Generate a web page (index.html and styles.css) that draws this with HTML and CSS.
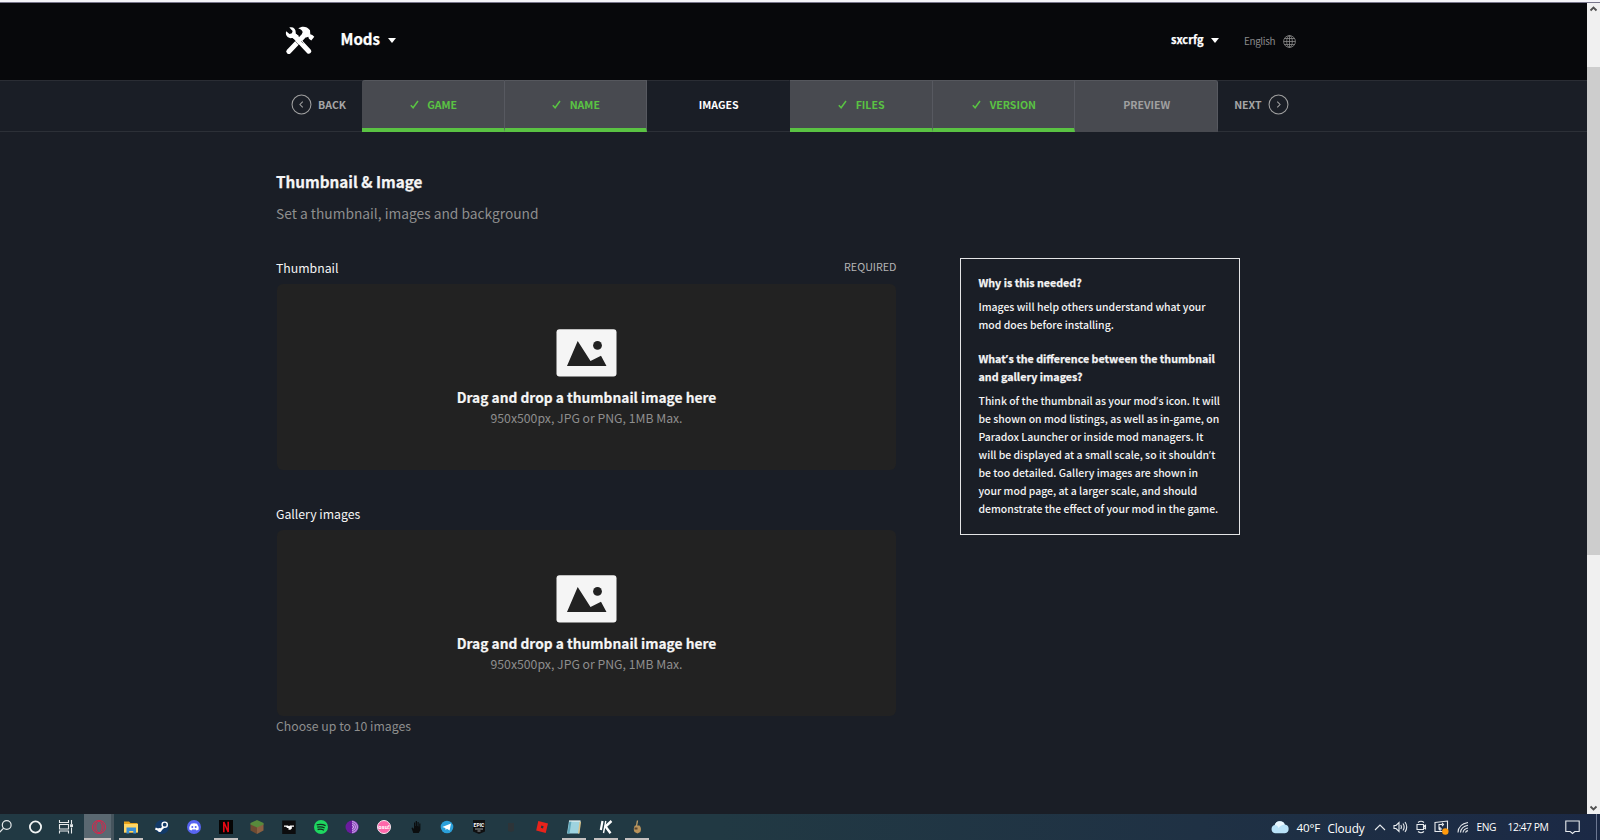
FILE: index.html
```
<!DOCTYPE html>
<html lang="en">
<head>
    <meta charset="UTF-8">
    <meta name="viewport" content="width=device-width, initial-scale=1.0">
    <title>Mods - Thumbnail &amp; Image</title>
    <link rel="stylesheet" href="styles.css">
</head>
<body>
    <div class="window-edge"></div>

    <div class="browser">
        <div class="page">
            <header class="header">
                <svg class="logo" viewBox="0 0 30 30">
                    <g fill="none" stroke="#fff" stroke-linecap="round">
                        <path d="M9.5 10 L23.8 25.2" stroke-width="5"/>
                        <path d="M3.8 25.4 L20 8.5" stroke-width="5"/>
                    </g>
                    <path fill="#fff" d="M4.3 1.6 L7.6 4.9 L6.9 7.2 L4.5 7.9 L1.2 5.2 C-.1 9 2.6 13 7.4 12 L10.5 13.6 L14 10 L10.6 7.6 C11.4 3.5 8.6 .3 4.3 1.6z"/>
                    <path fill="#fff" d="M13.2 2.5 C17-.2 21.8.2 25 4.2 L25.3 8.2 L27.3 8.9 L29.3 10.7 L26.3 14.5 L23.9 12.8 L23.3 10.7 L21.2 11.5 L17 8 C18.6 5.2 16.7 3.4 13.2 2.5z"/>
                    <path d="M10.2 15.2 L15 20.2 M16.2 15.2 L18.3 17.4" stroke="#07080b" stroke-width=".5"/>
                </svg>
                <div class="menu">Mods <i class="caret"></i></div>
                <div class="user">sxcrfg <i class="caret"></i></div>
                <div class="language">
                    English
                    <svg class="globe" viewBox="0 0 13 13" fill="none" stroke="#8b8b8b" stroke-width=".8">
                        <circle cx="6.5" cy="6.5" r="5.9"/>
                        <ellipse cx="6.5" cy="6.5" rx="2.8" ry="5.9"/>
                        <path d="M6.5 .6v11.8M.6 6.5h11.8M1.4 3.5h10.2M1.4 9.5h10.2"/>
                    </svg>
                </div>
            </header>

            <nav class="steps">
                <a class="step-link back">
                    <svg viewBox="0 0 20 20"><circle cx="10" cy="10" r="9"/><path d="M11.2 7.2 L8.5 10 L11.2 12.8"/></svg>
                    BACK
                </a>
                <a class="step done first"><svg class="check" viewBox="0 0 9 9"><path d="M.8 5.2 L3.1 7.7 L8 1"/></svg>GAME</a>
                <a class="step done"><svg class="check" viewBox="0 0 9 9"><path d="M.8 5.2 L3.1 7.7 L8 1"/></svg>NAME</a>
                <a class="step active">IMAGES</a>
                <a class="step done"><svg class="check" viewBox="0 0 9 9"><path d="M.8 5.2 L3.1 7.7 L8 1"/></svg>FILES</a>
                <a class="step done"><svg class="check" viewBox="0 0 9 9"><path d="M.8 5.2 L3.1 7.7 L8 1"/></svg>VERSION</a>
                <a class="step last">PREVIEW</a>
                <a class="step-link next">
                    NEXT
                    <svg viewBox="0 0 20 20"><circle cx="10" cy="10" r="9"/><path d="M8.8 7.2 L11.5 10 L8.8 12.8"/></svg>
                </a>
            </nav>

            <main class="content">
                <section class="uploads">
                    <h1>Thumbnail &amp; Image</h1>
                    <p class="subtitle">Set a thumbnail, images and background</p>

                    <div class="label-row">
                        <span class="label">Thumbnail</span>
                        <span class="required">REQUIRED</span>
                    </div>
                    <div class="dropzone">
                        <svg class="picture" viewBox="0 0 61 48">
                            <rect x=".5" y=".3" width="60" height="47.2" rx="3" fill="#f5f5f5"/>
                            <path d="M11 37 L21.7 12 L34.5 32 L45 26.7 L50.5 37z" fill="#222"/>
                            <circle cx="41.5" cy="16.4" r="4.4" fill="#222"/>
                        </svg>
                        <strong>Drag and drop a thumbnail image here</strong>
                        <span>950x500px, JPG or PNG, 1MB Max.</span>
                    </div>

                    <div class="label-row gallery">
                        <span class="label">Gallery images</span>
                    </div>
                    <div class="dropzone">
                        <svg class="picture" viewBox="0 0 61 48">
                            <rect x=".5" y=".3" width="60" height="47.2" rx="3" fill="#f5f5f5"/>
                            <path d="M11 37 L21.7 12 L34.5 32 L45 26.7 L50.5 37z" fill="#222"/>
                            <circle cx="41.5" cy="16.4" r="4.4" fill="#222"/>
                        </svg>
                        <strong>Drag and drop a thumbnail image here</strong>
                        <span>950x500px, JPG or PNG, 1MB Max.</span>
                    </div>
                    <p class="hint">Choose up to 10 images</p>
                </section>

                <aside class="info">
                    <h2>Why is this needed?</h2>
                    <p>Images will help others understand what your<br>mod does before installing.</p>
                    <h2>What<span class="apos">’</span>s the difference between the thumbnail<br>and gallery images?</h2>
                    <p>Think of the thumbnail as your mod<span class="apos">’</span>s icon. It will<br>be shown on mod listings, as well as in-game, on<br>Paradox Launcher or inside mod managers. It<br>will be displayed at a small scale, so it shouldn<span class="apos">’</span>t<br>be too detailed. Gallery images are shown in<br>your mod page, at a larger scale, and should<br>demonstrate the effect of your mod in the game.</p>
                </aside>
            </main>
        </div>

        <div class="scrollbar">
            <svg viewBox="0 0 13 12"><path d="M3.5 7.5 L6.5 4.5 L9.5 7.5"/></svg>
            <div class="thumb"></div>
            <svg viewBox="0 0 13 12"><path d="M3.5 4.5 L6.5 7.5 L9.5 4.5"/></svg>
        </div>
    </div>

    <footer class="taskbar">
        <div class="apps">
            <!-- search -->
            <div class="app"><svg viewBox="0 0 20 20" fill="none" stroke="#e6eaeb" stroke-width="1.2"><circle cx="12.7" cy="8" r="4.4"/><path d="M9.6 11.2 L5 16"/></svg></div>
            <!-- cortana -->
            <div class="app"><svg viewBox="0 0 20 20"><circle cx="9.5" cy="10" r="5.6" fill="none" stroke="#f2f5f5" stroke-width="1.8"/></svg></div>
            <!-- task view -->
            <div class="app"><svg viewBox="0 0 20 20" fill="none" stroke="#e6eaeb" stroke-width="1.1"><path d="M2.500 3v2.500h9V3M2.500 16.500v-2.500h9v2.500M2.500 7.500h9v4.500h-9zM14.500 3v4M14.500 10.500v6"/><rect x="13.700" y="7.800" width="1.700" height="1.700" fill="#fff"/></svg></div>
            <!-- opera -->
            <div class="app current"><svg viewBox="0 0 20 20" fill="none" stroke="#d7264c" stroke-width="1"><circle cx="10" cy="10" r="6.600"/><ellipse cx="10" cy="10" rx="3.200" ry="5.700"/><ellipse cx="10" cy="10" rx="4.700" ry="6.600" stroke-width=".5"/></svg></div>
            <!-- explorer -->
            <div class="app open"><svg viewBox="0 0 20 20"><path d="M3 4.500h5l1.500 1.500h7v9.500H3z" fill="#e8a21a"/><path d="M3 7h14v8.500H3z" fill="#ffd766"/><path d="M5.500 10.500h9.500v6h-2.700v-2.500H8.200v2.500H5.500z" fill="#3a8fd6"/></svg></div>
            <!-- steam -->
            <div class="app"><svg viewBox="0 0 20 20"><circle cx="10" cy="10" r="7" fill="#123a68"/><path d="M3.400 11.500 L8 13.500 L12 9.500" stroke="#fff" stroke-width="2.200" fill="none"/><circle cx="12.700" cy="7.700" r="2.600" fill="#123a68" stroke="#fff" stroke-width="1.400"/><circle cx="7.600" cy="13" r="2" fill="#fff"/></svg></div>
            <!-- discord -->
            <div class="app"><svg viewBox="0 0 20 20"><circle cx="10" cy="10" r="7" fill="#5865f2"/><path d="M7 6.700 Q10 5.800 13 6.700 Q15 9.500 14.700 12.500 L12.600 13.500 L11.800 12.500 H8.200 L7.400 13.500 L5.300 12.500 Q5 9.500 7 6.700z" fill="#fff"/><circle cx="8.300" cy="10" r="1" fill="#5865f2"/><circle cx="11.700" cy="10" r="1" fill="#5865f2"/></svg></div>
            <!-- netflix -->
            <div class="app open"><svg viewBox="0 0 20 20"><rect x="3" y="3" width="14" height="14" fill="#050505"/><path d="M7.800 15.200V5l4.400 10V4.800" fill="none" stroke="#e50914" stroke-width="1.600"/></svg></div>
            <!-- minecraft -->
            <div class="app"><svg viewBox="0 0 20 20"><path d="M3.500 6.500 L10 9.500V17L3.500 13.500z" fill="#6e4a32"/><path d="M16.500 6.500 L10 9.500V17l6.500-3.500z" fill="#8a6042"/><path d="M10 3l6.500 3v1.500L10 10.500 3.500 7.500V6z" fill="#588a3c"/></svg></div>
            <!-- launcher -->
            <div class="app"><svg viewBox="0 0 20 20"><rect x="3.200" y="3.500" width="13.500" height="13.500" fill="#0c0c0d"/><path d="M5 8.500h4l1 .8 1-.8h4v1.300h-2.300l.3 1.500-1.500 1.500h-2V11H8.200L7 9.800H5z" fill="#fff"/></svg></div>
            <!-- spotify -->
            <div class="app"><svg viewBox="0 0 20 20"><circle cx="10" cy="10" r="7" fill="#1ed760"/><path d="M5.700 7.800 Q10.500 6.500 14.600 8.600M6.200 10.200 Q10.300 9.200 13.700 11M6.600 12.500 Q10 11.600 13 13.200" fill="none" stroke="#12311f" stroke-width="1.300"/></svg></div>
            <!-- tor -->
            <div class="app"><svg viewBox="0 0 20 20"><circle cx="10" cy="10" r="6.500" fill="#6a1b9e"/><path d="M10 3.500a6.500 6.500 0 0 1 0 13z" fill="#8840bd"/><g fill="none" stroke="#e0c8f0" stroke-width=".8"><path d="M10 4.600a5.400 5.400 0 0 1 0 10.800M10 6.500a3.500 3.500 0 0 1 0 7M10 8.400a1.600 1.600 0 0 1 0 3.200"/></g></svg></div>
            <!-- osu -->
            <div class="app"><svg viewBox="0 0 20 20"><circle cx="10" cy="10" r="6.500" fill="#ff66aa" stroke="#f7e9f0" stroke-width="1"/><text class="osu" x="10" y="12" text-anchor="middle">osu!</text></svg></div>
            <!-- hand -->
            <div class="app"><svg viewBox="0 0 20 20" fill="#0b0d0e"><path d="M7.300 16 L5.500 11 L6.700 10.500 L8 12V5.500h1.200V9h.5V4h1.300v5h.5V5h1.200v4.500h.5V6.500h1.200V13 L12.700 16z"/></svg></div>
            <!-- telegram -->
            <div class="app"><svg viewBox="0 0 20 20"><circle cx="10" cy="10" r="6.300" fill="#2ba0da"/><path d="M5.300 10 L14 6.500 L12.600 13.500 L9.900 11.700 L8.700 13 L8.300 11z" fill="#fff"/></svg></div>
            <!-- epic -->
            <div class="app"><svg viewBox="0 0 20 20"><path d="M4 3h12v11.500L10 17 4 14.500z" fill="#101011"/><text class="epic" x="10" y="9.500" text-anchor="middle">EPIC</text><path d="M6 12h8M8.500 14h3" stroke="#ddd" stroke-width=".7"/></svg></div>
            <!-- idle app -->
            <div class="app"><svg viewBox="0 0 20 20"><path d="M7 6h6v8l-3 1-3-1z" fill="#2d3438"/></svg></div>
            <!-- roblox -->
            <div class="app"><svg viewBox="0 0 20 20"><path d="M6.300 4 L16 6.500 L13.700 16 L4.200 13.500z" fill="#e8231b"/><path d="M9.400 8.600l2.200.6-.6 2.200-2.200-.6z" fill="#24343c"/></svg></div>
            <!-- notepad -->
            <div class="app open"><svg viewBox="0 0 20 20"><path d="M5 4h11.500L15 16.500H3z" fill="#9ed3df"/><path d="M5.500 4h2L5.500 16.500H3.500z" fill="#5fa6ba"/><path d="M15.500 4.500 L17 5 15.500 16.500H14z" fill="#d9c38b"/><path d="M5 4h11.500" stroke="#e9f4f4" stroke-width="1.200"/></svg></div>
            <!-- angular logo mark -->
            <div class="app open"><svg viewBox="0 0 20 20" fill="none" stroke="#fff"><path d="M6.500 4 L4.800 13" stroke-width="2.200"/><path d="M15.500 4 L9.500 9.500 L14.500 16.200" stroke-width="2.400"/><path d="M9.800 4 L7.500 16" stroke-width="1.400"/></svg></div>
            <!-- paint jar -->
            <div class="app open"><svg viewBox="0 0 20 20"><path d="M10.500 3.500 L9.500 9" stroke="#c4a169" stroke-width="1.300"/><path d="M8 8.500h4.500q2.500 3 .8 6.500L10.500 16.500 7.500 15Q5.800 11.500 8 8.500z" fill="#b8935b"/><path d="M7.500 10.500h3v2h-3z" fill="#5d4630"/></svg></div>
        </div>

        <div class="tray">
            <svg class="cloud" viewBox="0 0 20 14">
                <path d="M5 13.300a4.200 4.200 0 0 1-.3-8.200A5.400 5.400 0 0 1 14.800 4.600 4.400 4.400 0 0 1 15 13.300z" fill="#b9e2f8"/>
                <path d="M4.700 5.100A5.400 5.400 0 0 1 14.800 4.600Q10 5 8.700 8.300 7.500 5.200 4.700 5.100z" fill="#e9f7ff"/>
            </svg>
            <span class="temp">40°F</span>
            <span class="sky">Cloudy</span>
            <svg class="up" viewBox="0 0 12 16"><path d="M1 11 L6 6 L11 11"/></svg>
            <svg class="sound" viewBox="0 0 15 16"><path d="M1 6.500h2L6 3.500v9L3 9.500H1zM7.800 6q1.200 2 0 4M10 4.500q2.300 3.500 0 7M12 3q3.500 5 0 10"/></svg>
            <svg class="meet" viewBox="0 0 11 16"><path d="M1 5.500h6.500v5H1zM7.500 7.500l2-1.200v3.500l-2-1.200M2 3.500Q5 1 8 3.500M2 12.500Q5 15 8 12.500"/></svg>
            <svg class="sync" viewBox="0 0 15 16"><path d="M1 3.500 L13.500 2v10.500L1 12.500zM8.500 5.500H5v4.500h3M8 3.800l1.500 1.700L8 7.200M6.500 8.500L5 10l1.500 1.500"/><circle cx="11.300" cy="12.500" r="3.200"/></svg>
            <svg class="wifi" viewBox="0 0 12 16"><path d="M1 13.500Q1.500 5 11 3.500M3.500 13.500Q4 7.500 11 6.200M6 13.500Q6.500 10 11 9M8.500 13.500Q9 12 11 11.600"/></svg>
            <span class="lang">ENG</span>
            <span class="clock">12:47 PM</span>
            <svg class="notes" viewBox="0 0 15 16"><path d="M.8 2h13.400v10.500H9.800L7.500 14.500 5.200 12.500H.8z"/></svg>
            <div class="desktop"></div>
        </div>
    </footer>
</body>
</html>
```
FILE: styles.css
```
* {
    margin: 0;
    padding: 0;
    box-sizing: border-box;
}

body {
    width: 1600px;
    height: 840px;
    overflow: hidden;
    display: flex;
    flex-direction: column;
    background: #1a1e26;
    color: #f5f5f5;
    font-family: 'Noto Sans CJK SC', sans-serif;
}

svg {
    display: block;
    flex: none;
}

.window-edge {
    height: 3px;
    background: #f4f4f8;
    border-bottom: 1px solid #77758a;
}

.browser {
    display: flex;
    height: 811px;
}

.page {
    width: 1587px;
}

/* Header */
.header {
    display: flex;
    align-items: flex-start;
    height: 77px;
    padding: 23px 0 0 285px;
    background: #07080b;
    line-height: 20px;
}

.logo {
    width: 30px;
    height: 30px;
}

.caret {
    border: 4px solid transparent;
    border-top: 5px solid #fff;
    border-bottom: 0;
}

.menu,
.user,
.language {
    display: flex;
    align-items: center;
}

.menu {
    width: 805px;
    margin: 2px 0 0 25.5px;
    gap: 7.5px;
    color: #fff;
    font-size: 15.1px;
    font-weight: 700;
    -webkit-text-stroke: .25px #fff;
}

.menu .caret {
    margin-top: 4px;
}

.user {
    width: 73px;
    margin: 3px 0 0 25.5px;
    gap: 7.5px;
    color: #fff;
    font-size: 11.03px;
    font-weight: 700;
    -webkit-text-stroke: .25px #fff;
}

.user .caret {
    margin-top: 2px;
}

.language {
    gap: 8px;
    margin-top: 5px;
    color: #8b8b8b;
    font-size: 9.9px;
    letter-spacing: -.35px;
}

.globe {
    width: 13px;
    height: 13px;
}

/* Steps */
.steps {
    display: flex;
    height: 52px;
    padding-left: 291px;
    border-top: 1px solid #2a2d34;
    border-bottom: 1px solid #2c3037;
    font-size: 10.6px;
    font-weight: 700;
    line-height: 20px;
}

.step-link {
    display: flex;
    align-items: center;
    height: 47px;
    color: #a5a5a5;
}

.step-link svg {
    width: 21px;
    height: 21px;
    fill: none;
    stroke: #a0a0a0;
    stroke-width: 1;
}

.back {
    width: 71px;
    gap: 6px;
}

.next {
    margin-left: 16px;
    gap: 6px;
}

.step {
    display: flex;
    align-items: center;
    justify-content: center;
    gap: 8.5px;
    width: 142.7px;
    height: 52px;
    margin-top: -1px;
    padding-left: 1px;
    background: #484a50;
    border-top: 1px solid #55575d;
    border-right: 1px solid #575960;
    border-bottom: 4px solid #484a50;
    color: #a0a0a0;
}

.step.first {
    border-top-left-radius: 3px;
}

.step.last {
    border-top-right-radius: 3px;
}

.step.done {
    border-bottom-color: #5ac343;
    color: #5ac343;
}

.step.active {
    height: 51px;
    background: #1a1e26;
    border-color: #1a1e26;
    border-top-color: #2a2d34;
    border-bottom-width: 3px;
    color: #fff;
}

.check {
    width: 9px;
    height: 9px;
    fill: none;
    stroke: #5ac343;
    stroke-width: 1.5;
}

/* Content */
.content {
    display: flex;
    align-items: flex-start;
    padding: 37px 0 0 276px;
}

.uploads {
    width: 621px;
}

h1 {
    font-size: 15.26px;
    line-height: 24px;
    -webkit-text-stroke: .25px #f5f5f5;
}

.subtitle {
    margin-top: 8px;
    color: #8e8e8e;
    font-size: 13.78px;
    line-height: 24px;
}

.label-row {
    display: flex;
    justify-content: space-between;
    margin: 33px 0 6px;
    line-height: 20px;
}

.label-row.gallery {
    margin-top: 34px;
}

.label {
    font-size: 12.28px;
}

.required {
    margin: -1px .5px 0 0;
    color: #b5b5b5;
    font-size: 10.73px;
}

.dropzone {
    display: flex;
    flex-direction: column;
    align-items: center;
    width: 619px;
    height: 186px;
    margin-left: 1px;
    padding-top: 45px;
    background: #222;
    border-radius: 6px;
    line-height: 20px;
}

.picture {
    width: 61px;
    height: 48px;
    margin-bottom: 10px;
}

.dropzone strong {
    font-size: 13.75px;
    -webkit-text-stroke: .2px #f5f5f5;
}

.dropzone span {
    margin-top: 1px;
    color: #8e8e8e;
    font-size: 12.25px;
}

.hint {
    color: #8e8e8e;
    font-size: 12.26px;
    line-height: 20px;
}

/* Info box */
.info {
    width: 280px;
    height: 277px;
    margin: 89px 0 0 63px;
    padding: 15px 0 0 17.5px;
    border: 1px solid #e4e5e6;
    font-size: 10.45px;
    line-height: 18px;
    white-space: nowrap;
}

.info h2 {
    margin-bottom: 6px;
    font-size: 10.7px;
    -webkit-text-stroke: .25px #f5f5f5;
}

.info p {
    margin-bottom: 15.5px;
    font-weight: 500;
}

/* The CJK face draws a full-width apostrophe */
.apos {
    font-family: 'Open Sans', sans-serif;
    line-height: 1;
    letter-spacing: .4px;
}

/* Scrollbar */
.scrollbar {
    display: flex;
    flex-direction: column;
    justify-content: space-between;
    width: 13px;
    background: #f0f0f0;
}

.scrollbar svg {
    width: 13px;
    height: 12px;
    fill: none;
    stroke: #505050;
    stroke-width: 1.8;
}

.thumb {
    height: 488px;
    margin: 52px 0 auto;
    background: #cdcdcd;
}

/* Taskbar */
.taskbar {
    display: flex;
    justify-content: space-between;
    height: 26px;
    background: linear-gradient(90deg, #213943 0%, #213943 45%, #1f3144 75%, #1b2945 100%);
}

.apps {
    display: flex;
    margin-left: -12px;
}

.app {
    display: flex;
    flex-direction: column;
    align-items: center;
    width: 31.68px;
    padding-top: 2.5px;
}

.app svg {
    width: 20px;
    height: 20px;
}

.app.open::after,
.app.current::after {
    content: '';
    width: 24px;
    height: 2px;
    margin-top: 1.5px;
    background: #c6c2c1;
}

.app.current {
    width: 30px;
    margin: 0 .68px 0 1px;
    background: #5a6871;
    border-right: 3px solid #45545d;
}

.app.current svg {
    margin-left: 2px;
}

.app.current::after {
    width: 27px;
}

.osu {
    fill: #fff;
    font: 700 5.5px 'Open Sans', sans-serif;
}

.epic {
    fill: #fff;
    font: 700 5px 'Roboto', sans-serif;
}

.tray {
    display: flex;
    align-items: center;
    color: #fff;
    font-family: 'Open Sans', sans-serif;
    line-height: 16px;
    white-space: nowrap;
}

.tray svg {
    height: 16px;
    fill: none;
    stroke: #e8ebee;
    stroke-width: 1.1;
}

.tray .cloud {
    width: 20px;
    height: 14px;
    stroke: none;
}

.temp {
    width: 31px;
    margin-left: 6.5px;
    padding-top: 2px;
    font-size: 11.6px;
    letter-spacing: -.15px;
}

.sky {
    width: 46px;
    padding-top: 2px;
    font-size: 11.8px;
    letter-spacing: -.15px;
}

.tray .up {
    width: 12px;
    margin-right: 7px;
}

.tray .sound {
    width: 15px;
    margin-right: 8px;
}

.tray .meet {
    width: 11px;
    margin-right: 7px;
}

.tray .sync {
    width: 15px;
    margin-right: 8px;
}

.tray .sync circle {
    fill: #ff9a0c;
    stroke: none;
}

.tray .wifi {
    width: 12px;
    margin-right: 8px;
}

.lang {
    width: 31px;
    font-size: 10.2px;
    letter-spacing: -.4px;
}

.clock {
    width: 57px;
    font-size: 10.4px;
    letter-spacing: -.5px;
}

.tray .notes {
    width: 15px;
    margin-right: 16.5px;
}

.desktop {
    width: 4px;
    height: 26px;
    border-left: 1px solid #6b7690;
}
```
